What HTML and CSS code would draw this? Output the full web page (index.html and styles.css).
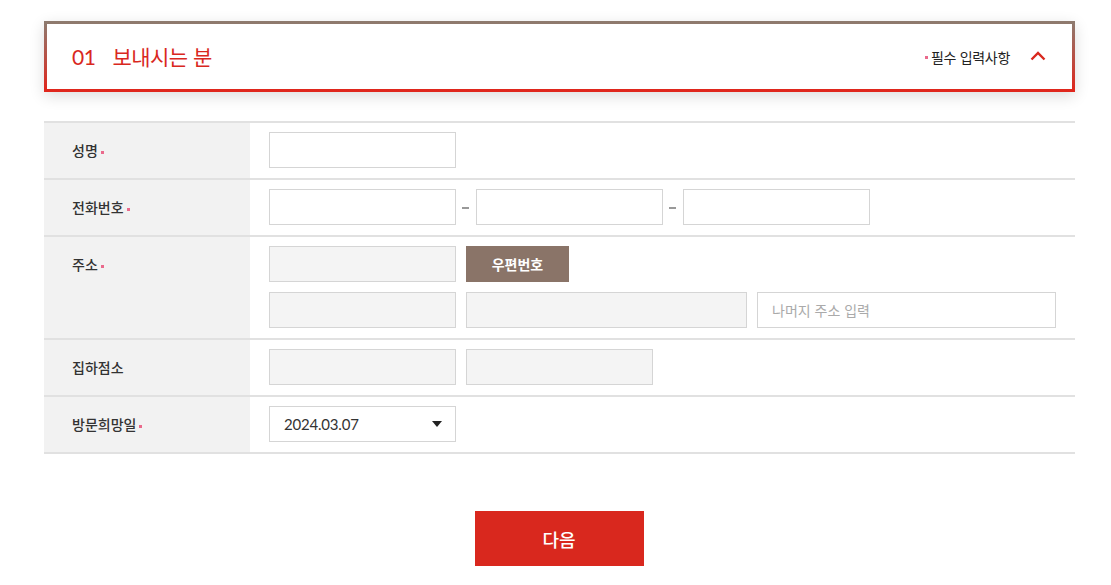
FILE: index.html
```html
<!DOCTYPE html>
<html lang="ko">
<head>
<meta charset="utf-8">
<link rel="stylesheet" href="styles.css">
</head>
<body>
<div class="wrap">
  <div class="sec-head">
    <h2 class="sec-title"><span class="num">01</span><span>보내시는 분</span></h2>
    <div class="sec-right">
      <span class="req-note"><i class="dot"></i>필수 입력사항</span>
      <svg class="chev" width="16" height="10" viewBox="0 0 16 10"><path d="M1.5 8.5 L8 2 L14.5 8.5" fill="none" stroke="#d9281e" stroke-width="2.4"/></svg>
    </div>
  </div>

  <div class="form">
    <div class="row">
      <div class="label">성명<i class="dot"></i></div>
      <div class="field"><div class="line"><input class="inp" type="text"></div></div>
    </div>
    <div class="row">
      <div class="label">전화번호<i class="dot"></i></div>
      <div class="field"><div class="line">
        <input class="inp" type="text"><span class="dash"></span><input class="inp" type="text"><span class="dash"></span><input class="inp" type="text">
      </div></div>
    </div>
    <div class="row">
      <div class="label">주소<i class="dot"></i></div>
      <div class="field stack">
        <div class="line gap10"><input class="inp ro" type="text" readonly><button class="zip">우편번호</button></div>
        <div class="line gap10"><input class="inp ro" type="text" readonly><input class="inp ro wide" type="text" readonly><input class="inp rest" type="text" placeholder="나머지 주소 입력"></div>
      </div>
    </div>
    <div class="row">
      <div class="label">집하점소</div>
      <div class="field"><div class="line gap10"><input class="inp ro" type="text" readonly><input class="inp ro" type="text" readonly></div></div>
    </div>
    <div class="row">
      <div class="label">방문희망일<i class="dot"></i></div>
      <div class="field"><div class="line">
        <div class="select"><span>2024.03.07</span><svg width="10" height="6" viewBox="0 0 10 6"><path d="M0 0 H10 L5 6 Z" fill="#222"/></svg></div>
      </div></div>
    </div>
  </div>

  <div class="actions"><button class="next">다음</button></div>
</div>
</body>
</html>
```

FILE: styles.css
```css
* { box-sizing: border-box; }
body {
  margin: 0;
  background: #fff;
  font-family: "Noto Sans CJK KR", "Noto Sans", sans-serif;
  color: #333;
}
.wrap {
  width: 1031px;
  margin: 21px 0 0 44px;
}
.sec-head {
  height: 71px;
  border: 3px solid transparent;
  border-image: linear-gradient(#8e7a6e, #e0261c) 1;
  box-shadow: 0 4px 14px rgba(0,0,0,0.14);
  display: flex;
  align-items: center;
  justify-content: space-between;
  padding: 0 26px 0 25px;
  background: #fff;
}
.sec-title {
  margin: 0;
  font-weight: 400;
  font-size: 21px;
  color: #d9281e;
  display: flex;
  align-items: baseline;
  gap: 17px;
  letter-spacing: -0.5px;
  margin-top: -2px;
}
.sec-title .num { font-family: "Lato", sans-serif; font-weight: 400; font-size: 21px; letter-spacing: -0.5px; }
.sec-right { display: flex; align-items: center; gap: 20px; }
.req-note {
  font-size: 14px;
  color: #222;
  display: flex;
  align-items: center;
  letter-spacing: -0.3px;
}
.req-note .dot { margin: 2px 3px 0 0; }
.dot {
  display: inline-block;
  width: 3px;
  height: 3px;
  background: #ea6a8c;
  margin-left: 3px;
  vertical-align: middle;
}
.chev { display: block; margin-top: -1px; }

.form {
  margin-top: 29px;
  border-top: 2px solid #e1e1e1;
}
.row {
  display: flex;
  border-bottom: 2px solid #e1e1e1;
}
.label {
  width: 206px;
  flex: none;
  background: #f2f2f2;
  padding: 19px 0 0 28px;
  font-size: 14px;
  font-weight: 500;
  color: #333;
  display: flex;
  align-items: flex-start;
  line-height: 16px;
}
.label .dot { margin-top: 9px; }
.field {
  padding: 9px 0 10px 19px;
  flex: 1;
}
.stack { display: flex; flex-direction: column; gap: 10px; }
.line { display: flex; align-items: center; }
.gap10 { gap: 10px; }
.inp {
  width: 187px;
  height: 36px;
  border: 1px solid #d5d5d5;
  background: #fff;
  margin: 0;
  padding: 0 14px;
  font-family: inherit;
  font-size: 14px;
  outline: none;
}
.inp.ro { background: #f4f4f4; }
.inp.wide { width: 281px; }
.inp.rest { width: 299px; }
.inp.rest::placeholder { color: #aaa; }
.dash {
  width: 20px;
  height: 36px;
  position: relative;
}
.dash::after {
  content: "";
  position: absolute;
  left: 6px;
  top: 18px;
  width: 7px;
  height: 2px;
  background: #999;
}
.zip {
  width: 103px;
  height: 36px;
  border: 0;
  background: #8a7468;
  color: #fff;
  font-family: inherit;
  font-size: 14px;
  font-weight: 700;
  padding: 0;
}
.select {
  width: 187px;
  height: 36px;
  border: 1px solid #d5d5d5;
  display: flex;
  align-items: center;
  justify-content: space-between;
  padding: 0 13px 0 14px;
  font-family: "Lato", sans-serif;
  font-size: 15px;
  color: #333;
  letter-spacing: -0.2px;
}
.actions {
  display: flex;
  justify-content: center;
  margin-top: 57px;
  padding-right: 1px;
}
.next {
  width: 169px;
  height: 55px;
  border: 0;
  background: #d9281e;
  color: #fff;
  font-family: inherit;
  font-size: 18px;
  font-weight: 500;
}
```
